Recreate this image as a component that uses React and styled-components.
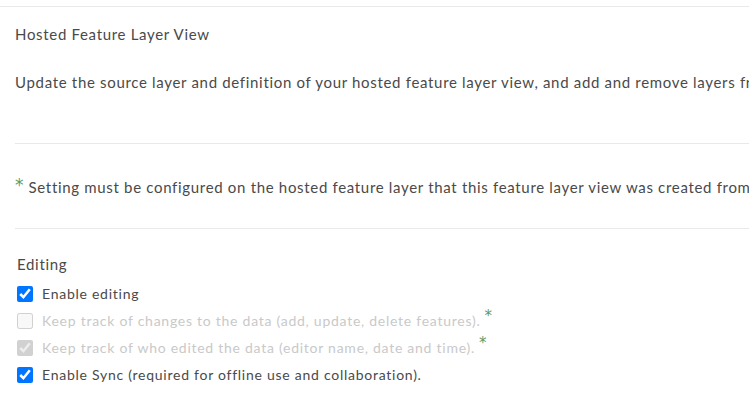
import React from 'react'
import styled, { createGlobalStyle } from 'styled-components'

const GlobalStyle = createGlobalStyle`
  html, body {
    margin: 0;
    padding: 0;
    background: #fff;
    overflow: hidden;
  }
  body {
    font-family: Lato, "Open Sans", sans-serif;
    color: #4a4a4a;
    letter-spacing: 0.68px;
  }
`

const Page = styled.div`
  padding-top: 6px;
  width: 1100px;
`

const Panel = styled.section`
  border-top: 1px solid #e9e9e9;
  padding: 17px 0 0 15px;
`

const Title = styled.h2`
  margin: 0;
  font-size: 15px;
  font-weight: 400;
  line-height: 20px;
  color: #4a4a4a;
`

const Description = styled.p`
  margin: 28px 0 0;
  font-size: 15px;
  line-height: 20px;
  white-space: nowrap;
  height: 71px;
`

const Divider = styled.hr`
  margin: 0;
  border: 0;
  border-top: 1px solid #e9e9e9;
`

const Note = styled.p`
  margin: 0;
  padding: 33px 0 31px;
  font-size: 15px;
  line-height: 20px;
  white-space: nowrap;
`

const Star = styled.sup`
  font-family: "DejaVu Sans", sans-serif;
  color: #5a9a6c;
  font-size: ${p => (p.$high ? '15px' : '17px')};
  line-height: 0;
  letter-spacing: 0;
  vertical-align: ${p => (p.$high ? '5px' : '2px')};
  margin: ${p => (p.$high ? '0 0 0 4px' : '0 5px 0 0')};
`

const Group = styled.fieldset`
  margin: 0;
  padding: 25px 0 0 2px;
  border: 0;
`

const Legend = styled.div`
  font-size: 15px;
  line-height: 20px;
  margin-bottom: 6px;
`

const Option = styled.label`
  display: flex;
  align-items: center;
  gap: 9px;
  height: 27px;
  font-size: 14px;
  letter-spacing: 0.74px;
  white-space: nowrap;
  color: ${p => (p.$disabled ? '#c9c9c9' : '#4a4a4a')};
`

const Box = styled.input`
  width: 16px;
  height: 16px;
  margin: 0;
  flex: none;
`

const options = [
  { text: 'Enable editing', checked: true },
  { text: 'Keep track of changes to the data (add, update, delete features).', disabled: true, star: true },
  { text: 'Keep track of who edited the data (editor name, date and time).', disabled: true, checked: true, star: true },
  { text: 'Enable Sync (required for offline use and collaboration).', checked: true },
]

export default function App() {
  return (
    <Page>
      <GlobalStyle />
      <Panel>
        <Title>Hosted Feature Layer View</Title>
        <Description>
          Update the source layer and definition of your hosted feature layer view, and add and remove layers from the view.
        </Description>
        <Divider />
        <Note>
          <Star>*</Star>Setting must be configured on the hosted feature layer that this feature layer view was created from.
        </Note>
        <Divider />
        <Group>
          <Legend>Editing</Legend>
          {options.map(o => (
            <Option key={o.text} $disabled={o.disabled}>
              <Box type="checkbox" defaultChecked={o.checked} disabled={o.disabled} />
              <span>
                {o.text}
                {o.star && <Star $high>*</Star>}
              </span>
            </Option>
          ))}
        </Group>
      </Panel>
    </Page>
  )
}
